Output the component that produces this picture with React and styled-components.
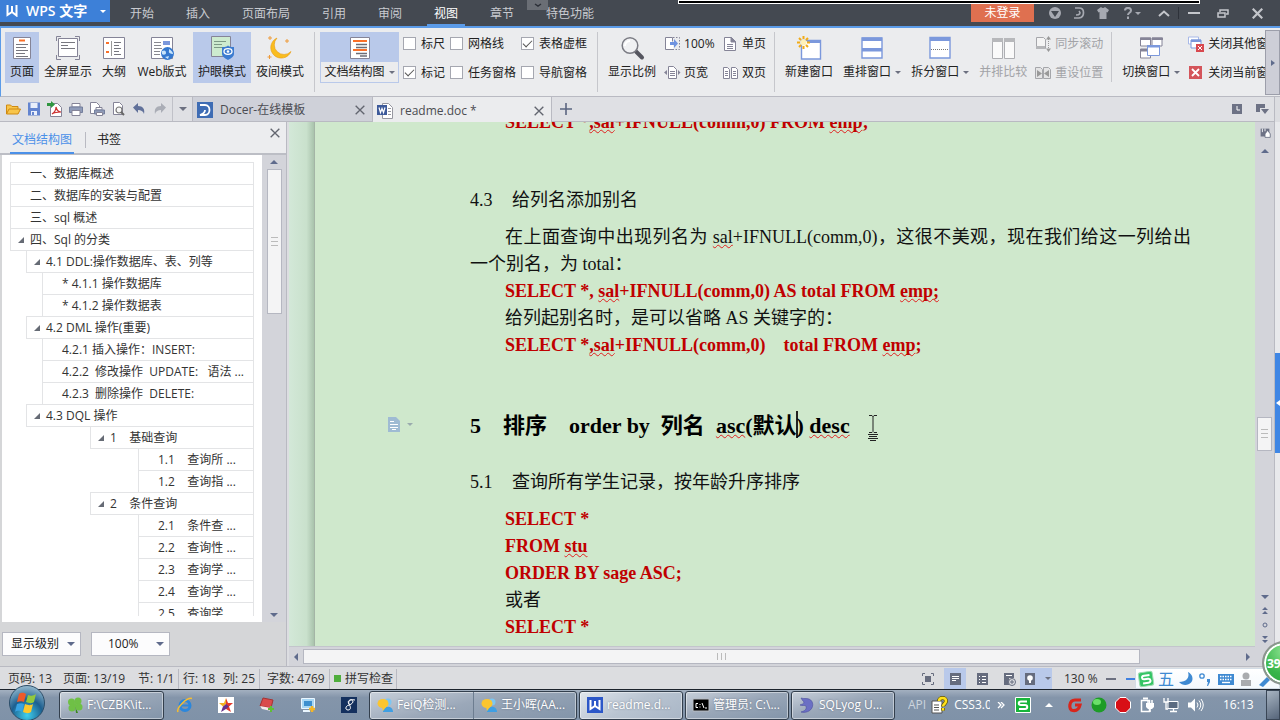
import styled, { createGlobalStyle, css } from 'styled-components';

const GlobalStyle = createGlobalStyle`
    * {
        box-sizing: border-box;
    }

    body {
        margin: 0;
        overflow: hidden;
        font-family: 'Open Sans', 'Noto Sans CJK SC', sans-serif;
        font-size: 12px;
        line-height: 20px;
        color: #222;
    }

    button, input, select {
        font: inherit;
        color: inherit;
        margin: 0;
    }

    button {
        background: none;
        border: none;
        padding: 0;
        white-space: nowrap;
    }

    svg {
        display: block;
        flex: none;
    }
`;

const Screen = styled.div`
    position: relative;
    display: flex;
    flex-direction: column;
    height: 100vh;
    overflow: hidden;
    background: #dcdde1;
`;

/* ---------- title bar ---------- */

const TitleBar = styled.header`
    display: flex;
    height: 28px;
    flex: none;
    background: #444951;
    border-bottom: 2px solid #5b9be8;
`;

const AppButton = styled.button`
    display: flex;
    align-items: center;
    width: 110px;
    height: 22px;
    padding: 0 4px 0 6px;
    background: #3d80d8;
    color: #fff;
    font-size: 14px;
    font-weight: 600;

    span {
        flex: 1;
        padding-left: 8px;
        text-align: left;
    }
`;

const Menu = styled.nav`
    display: flex;
    gap: 18px;
    padding-left: 13px;
`;

const MenuTab = styled.button`
    height: 26px;
    padding: 3px 7px 0;
    color: ${(p) => (p.$active ? '#fff' : '#c9cbd0')};
    border-bottom: 2px solid ${(p) => (p.$active ? '#5b9be8' : 'transparent')};
`;

const WindowTools = styled.div`
    display: flex;
    align-items: center;
    margin-left: auto;
    margin-right: 4px;
    color: #a6a9b1;
`;

const LoginButton = styled.button`
    width: 63px;
    height: 18px;
    line-height: 18px;
    margin-right: 9px;
    background: #df7050;
    color: #fff;
`;

const ToolSlot = styled.button`
    display: flex;
    align-items: center;
    justify-content: center;
    width: ${(p) => p.$w || 24}px;
    height: 22px;
`;

const ToolDivider = styled.i`
    width: 1px;
    height: 12px;
    background: #2e323a;
`;

const PullTab = styled.div`
    position: absolute;
    top: 0;
    left: 527px;
    width: 21px;
    height: 10px;
    background: #6a6e75;
`;

const RecordBar = styled.div`
    position: absolute;
    top: 0;
    left: 678px;
    right: 80px;
    height: 4px;
    background: #000;
    border: 1px solid #fff;
`;

/* ---------- ribbon ---------- */

const Ribbon = styled.section`
    display: flex;
    height: 69px;
    flex: none;
    background: #ebecee;
    border-left: 1px solid #5b9be8;
    border-bottom: 1px solid #b9bac2;
`;

const RibbonItems = styled.div`
    display: flex;
    flex: 1;
    min-width: 0;
    overflow: hidden;
    align-items: flex-start;
    padding: 4px 0 0 4px;
`;

const BigButtonBox = styled.button`
    display: flex;
    flex-direction: column;
    flex: none;
    min-width: ${(p) => p.$w || 0}px;
    height: 51px;
    align-items: center;
    padding: 0 5px;
    background: ${(p) => (p.$active ? '#b9c9ea' : 'none')};
    color: ${(p) => (p.disabled ? '#a2a3a7' : '#222')};
`;

const IconArea = styled.span`
    display: flex;
    align-items: center;
    justify-content: center;
    height: 30px;
    padding-top: 2px;
`;

const ButtonLabel = styled.span`
    display: flex;
    align-items: center;
    gap: 4px;
`;

const StructureButton = styled(BigButtonBox)`
    width: 79px;
    padding: 0;
    background: #b9c9ea;

    ${ButtonLabel} {
        width: 100%;
        justify-content: center;
        background: #ebecee;
        border: 1px solid #b9c9ea;
        border-top: none;
    }
`;

const RibbonDivider = styled.i`
    flex: none;
    width: 1px;
    height: ${(p) => p.$h || 60}px;
    margin: 0 5px;
    background: #c6c7cc;
`;

const CheckGrid = styled.div`
    display: grid;
    flex: none;
    grid-template-columns: 47px 71px 66px;
    grid-template-rows: 23px 23px;
    row-gap: 6px;
    padding: 0 5px 0 4px;
`;

const CheckLabel = styled.label`
    display: flex;
    align-items: center;
    gap: 5px;
    white-space: nowrap;

    input {
        appearance: none;
        display: grid;
        place-items: center;
        width: 13px;
        height: 13px;
        background: #fff;
        border: 1px solid #a5a7b0;
    }

    input:checked::after {
        content: '';
        width: 8px;
        height: 4px;
        margin-bottom: 2px;
        border-left: 1px solid #555;
        border-bottom: 1px solid #555;
        transform: rotate(-45deg);
    }
`;

const SmallGrid = styled.div`
    display: grid;
    flex: none;
    grid-template-columns: ${(p) => p.$cols || 'auto'};
    grid-template-rows: 23px 23px;
    row-gap: 6px;
    padding: 0 3px;
`;

const SmallButton = styled.button`
    display: flex;
    align-items: center;
    gap: 4px;
    color: ${(p) => (p.disabled ? '#a2a3a7' : '#222')};
`;

const RibbonScroll = styled.button`
    display: grid;
    place-items: center;
    width: 15px;
    height: 65px;
    margin-top: 2px;
    background: #cdced7;
    border: 1px solid #9c9eaa;
`;

/* ---------- quick access and document tabs ---------- */

const TabRow = styled.div`
    display: flex;
    height: 25px;
    flex: none;
    margin-right: 5px;
    background: #dfe0e4;
    border-bottom: 1px solid #b9bac2;
    border-right: 1px solid #b9bac2;
`;

const QuickBar = styled.div`
    display: flex;
    padding-left: 2px;
`;

const QuickButton = styled.button`
    display: grid;
    place-items: center;
    width: ${(p) => p.$w || 21}px;
`;

const QuickDivider = styled.i`
    width: 1px;
    margin-left: 2px;
    background: #c0c1c8;
`;

const DocTab = styled.div`
    display: flex;
    align-items: center;
    width: ${(p) => (p.$active ? 179 : 181)}px;
    height: ${(p) => (p.$active ? 25 : 24)}px;
    padding: 2px 7px 0 4px;
    gap: 7px;
    background: ${(p) => (p.$active ? '#ebecee' : '#cfd1d9')};
    border-right: 1px solid #b9bac2;
    border-left: ${(p) => (p.$active ? 'none' : '1px solid #b9bac2')};
    color: #4b4c52;

    span {
        flex: 1;
    }
`;

const RightTools = styled.div`
    display: flex;
    margin-left: auto;
`;

/* ---------- side pane ---------- */

const Body = styled.div`
    display: flex;
    flex: 1;
    min-height: 0;
`;

const SidePane = styled.aside`
    display: flex;
    flex-direction: column;
    flex: none;
    width: 287px;
    background: #d5d6d8;
    border-right: 1px solid #b9bac2;
`;

const PaneHeader = styled.div`
    display: flex;
    align-items: center;
    height: 33px;
    flex: none;
    padding-left: 10px;
    background: #ecedef;
    border-bottom: 2px solid #bcbec5;
`;

const PaneTab = styled.button`
    height: 33px;
    padding: 6px 2px 0;
    color: ${(p) => (p.$active ? '#4b90e8' : '#222')};
    border-bottom: 2px solid ${(p) => (p.$active ? '#4b90e8' : 'transparent')};
`;

const PaneTabDivider = styled.i`
    width: 1px;
    height: 16px;
    margin: 4px 9px 0 11px;
    background: #b9bac2;
`;

const PaneClose = styled.button`
    align-self: flex-start;
    margin: 6px 6px 0 auto;
`;

const PaneBody = styled.div`
    display: flex;
    flex: 1;
    min-height: 0;
    padding-left: 2px;
`;

const TreeArea = styled.div`
    display: flex;
    flex: 1;
    padding: 7px 8px 6px;
    background: #fff;
`;

const Tree = styled.ul`
    flex: 1;
    margin: 0;
    padding: 1px 0 0;
    overflow: hidden;
    list-style: none;
`;

const TreeRow = styled.li`
    display: flex;
    align-items: center;
    height: 23px;
    margin: -1px 0 0 ${(p) => p.$indent}px;
    border: 1px solid #e3e4e6;
    color: #333;
    white-space: pre;
`;

const Twisty = styled.span`
    display: flex;
    justify-content: center;
    width: 19px;
`;

const VScroll = styled.div`
    display: flex;
    flex-direction: column;
    align-items: center;
    flex: none;
    width: ${(p) => p.$w}px;
    padding-bottom: ${(p) => p.$bottom || 0}px;
    background: #d3d4da;
`;

const VThumb = styled.div`
    display: grid;
    place-items: center;
    width: 15px;
    height: ${(p) => p.$h}px;
    background: #f4f4f5;
    border: 1px solid #b5b7c1;
`;

const Track = styled.div`
    flex: ${(p) => p.$grow || 1};
`;

const ArrowSlot = styled.button`
    display: grid;
    place-items: center;
    flex: none;
    width: 14px;
    height: ${(p) => p.$h || 14}px;
`;

const PaneFooter = styled.div`
    display: flex;
    gap: 10px;
    height: 44px;
    flex: none;
    padding: 10px 0 0 2px;
`;

const Dropdown = styled.label`
    display: grid;
    align-items: center;
    width: 79px;
    height: 24px;
    background: #fcfcfd;
    border: 1px solid #b5b7c1;

    select {
        grid-area: 1 / 1;
        appearance: none;
        width: 100%;
        padding-left: ${(p) => p.$pad}px;
        background: none;
        border: none;
    }

    svg {
        grid-area: 1 / 1;
        justify-self: end;
        margin-right: 5px;
    }
`;

/* ---------- document ---------- */

const DocArea = styled.main`
    display: flex;
    flex-direction: column;
    flex: 1;
    min-width: 0;
    margin-left: 2px;
`;

const DocView = styled.div`
    display: flex;
    flex: 1;
    min-height: 0;
    overflow: hidden;
    background: #cfe8cc;
`;

const PageEdge = styled.div`
    flex: none;
    width: 26px;
    background: linear-gradient(90deg, #d3e8d8, #c9e1cc 70%, #a9c3ac);
    border-right: 1px solid #a4b5a6;
`;

const Page = styled.article`
    flex: 1;
    min-width: 0;
    max-width: 876px;
    margin-top: -13px;
    padding-left: 155px;
    font-family: 'Liberation Serif', 'Noto Sans CJK SC', serif;
    font-size: 18px;
    line-height: 27px;
    color: #111;
`;

const DocTitle = styled.h1`
    position: relative;
    display: flex;
    align-items: center;
    height: 27px;
    margin: 53px 0 30px;
    font-size: 22px;
    line-height: 27px;
    white-space: pre;
    color: #000;
`;

const DocHeading = styled.h2`
    display: flex;
    height: 27px;
    margin: ${(p) => p.$top}px 0 10px;
    font-size: 18px;
    font-weight: 400;
    white-space: pre;
`;

const Num = styled.span`
    width: ${(p) => p.$w}px;
`;

const Para = styled.p`
    margin: 0;
    padding-left: ${(p) => (p.$wrap ? 0 : 35)}px;
    text-indent: ${(p) => (p.$wrap ? 35 : 0)}px;
    text-align: ${(p) => (p.$wrap ? 'justify' : 'left')};
    white-space: ${(p) => (p.$wrap ? 'normal' : 'pre')};
    ${(p) =>
        p.$sql &&
        css`
            color: #c00000;
            font-weight: 700;
        `}
`;

const Typo = styled.span`
    text-decoration: underline wavy #e02020 1px;
    text-decoration-skip-ink: none;
    text-underline-offset: 1px;
`;

const Caret = styled.i`
    width: 2px;
    height: 27px;
    margin: -3px -1px 0;
    background: #222;
`;

const SectionMark = styled.button`
    position: absolute;
    left: -82px;
    top: 5px;
    display: flex;
    align-items: center;
    gap: 7px;
`;

const Pointer = styled.svg`
    position: absolute;
    left: 397px;
    top: 3px;
`;

const HScroll = styled.div`
    display: flex;
    align-items: center;
    flex: none;
    height: 20px;
    background: #d3d4da;
    border-top: 1px solid #c3c5cc;
`;

const HThumb = styled.div`
    display: grid;
    place-items: center;
    flex: 1;
    height: 15px;
    margin-right: 101px;
    background: #f4f4f5;
    border: 1px solid #b5b7c1;
`;

const DockStrip = styled.div`
    display: flex;
    align-items: center;
    flex: none;
    width: 6px;
    background: #e8e9ec;
    border-left: 1px solid #b9bac2;
`;

const DockHandle = styled.button`
    display: grid;
    place-items: center;
    width: 5px;
    height: 100px;
    margin-bottom: -18px;
    background: #3f86e4;
`;

/* ---------- status bar ---------- */

const StatusBar = styled.footer`
    display: flex;
    align-items: center;
    height: 23px;
    flex: none;
    padding: 1px 0 0 8px;
    background: #dcdde0;
    border-top: 1px solid #b9bac2;
    color: #333;
    white-space: pre;
`;

const StatusItem = styled.span`
    width: ${(p) => p.$w}px;
`;

const StatusDivider = styled.i`
    width: 1px;
    height: 20px;
    margin-right: ${(p) => p.$gap || 4}px;
    background: #b9bac2;
`;

const GreenDot = styled.i`
    width: 7px;
    height: 7px;
    margin-right: 4px;
    background: #4fae3c;
`;

const ViewButtons = styled.div`
    display: flex;
    align-items: center;
    margin-left: auto;
    margin-right: 144px;
`;

const ViewButton = styled.button`
    display: flex;
    align-items: center;
    justify-content: center;
    gap: 7px;
    width: ${(p) => p.$w || 28}px;
    height: 21px;
    background: ${(p) => (p.$active ? '#b9c9ea' : 'none')};
`;

const ZoomValue = styled.span`
    width: 38px;
    margin-left: 12px;
`;

const ZoomLine = styled.i`
    width: 10px;
    height: 2px;
    margin-left: ${(p) => p.$gap}px;
    background: ${(p) => p.$color};
`;

/* ---------- taskbar ---------- */

const Taskbar = styled.footer`
    position: relative;
    display: flex;
    align-items: center;
    height: 31px;
    flex: none;
    background: linear-gradient(#a3b0c0, #8495aa 25%, #7f92a8);
    border-top: 1px solid #1c232c;
    color: #fff;
`;

const StartButton = styled.button`
    flex: none;
    width: 59px;
    height: 36px;
    margin-top: -5px;
    padding-left: 9px;
`;

const TaskGroup = styled.div`
    display: flex;
    flex: none;
    height: 29px;
    margin-right: ${(p) => p.$gap || 0}px;
    border: 1px solid #333f4d;
    border-radius: 3px;
    background: ${(p) =>
        p.$active
            ? 'linear-gradient(150deg, #dfe5ec, #b9c4d1 50%, #a9b6c6)'
            : 'linear-gradient(165deg, #c8d0da, #9ba8b9 45%, #8294a9)'};
    box-shadow: inset 0 0 0 1px rgba(255, 255, 255, 0.45);
`;

const Task = styled.button`
    display: flex;
    align-items: center;
    gap: 4px;
    width: ${(p) => p.$w || 102}px;
    padding-left: 7px;
    color: #fff;
    text-shadow: 0 0 2px rgba(60, 70, 90, 0.6);

    & + & {
        border-left: 1px solid #6d7d90;
    }
`;

const LaunchSlot = styled.button`
    display: grid;
    place-items: center;
    width: ${(p) => p.$w || 41}px;
    height: 28px;
`;

const LinkBar = styled.div`
    display: flex;
    align-items: center;
    gap: 6px;
    width: 82px;
    margin-left: 13px;
    overflow: hidden;
    white-space: nowrap;
`;

const Faded = styled.span`
    color: #cdd5de;
`;

const Tray = styled.div`
    display: flex;
    align-items: center;
    margin-left: auto;
`;

const Clock = styled.time`
    width: 59px;
    padding-left: 16px;
`;

const ShowDesktop = styled.button`
    width: 14px;
    height: 30px;
    background: linear-gradient(150deg, #a8b4c2, #56657a);
    border: 1px solid #3a4656;
`;

const ImeBar = styled.div`
    position: absolute;
    right: 0;
    bottom: 31px;
    display: flex;
    align-items: center;
    gap: 4px;
    width: 145px;
    height: 21px;
    padding-left: 2px;
    background: linear-gradient(#fff, #f4f9fd);
    border: 1px solid #d4dde6;
    color: #3f8ad2;
    font-size: 16px;
`;

const SpeedBall = styled.div`
    position: absolute;
    right: -26px;
    bottom: 35px;
    width: 44px;
    height: 44px;
    padding-left: 3px;
    border-radius: 50%;
    border: 2px solid #8d9490;
    background: radial-gradient(circle at 50% 20%, #8be28f, #38b54a 60%, #2ea540);
    box-shadow: inset 0 0 0 2px #fff;
    color: #fff;
    font-size: 12px;
    font-weight: 700;
    line-height: 42px;
`;

/* ---------- icons ---------- */

const G = '#858497';
const O = '#fa7029';
const B = '#7b98dc';

const Down = ({ color = '#6c7080', w = 6 }) => (
    <svg width={w} height={w / 2} viewBox="0 0 6 3"><path d="M0 0h6L3 3z" fill={color} /></svg>
);

const Up = () => (
    <svg width="8" height="4" viewBox="0 0 8 4"><path d="M0 4h8L4 0z" fill="#5f6b8c" /></svg>
);

const Cross = ({ size = 9, color = '#62656f', sw = 1.2 }) => (
    <svg width={size} height={size} viewBox="0 0 9 9">
        <path d="M.6.6l7.8 7.8M8.4.6L.6 8.4" stroke={color} strokeWidth={sw} />
    </svg>
);

const Grip = ({ turned }) => (
    <svg width="9" height="9" viewBox="0 0 9 9">
        <path d={turned ? 'M.5 1v7M4.5 1v7M8.5 1v7' : 'M1 .5h7M1 4.5h7M1 8.5h7'} stroke="#bbb" />
    </svg>
);

const WpsMark = () => (
    <svg width="12" height="12" viewBox="0 0 12 12">
        <path d="M1.500 0v10L6 7l4.500 3.500V0M6 1v6" fill="none" stroke="#fff" strokeWidth="2" />
    </svg>
);

const bigIcons = {
    page: (
        <>
            <path d="M3.500 1.500h17v21h-17z" fill="#fff" stroke={G} />
            <path d="M9 4.500h6" stroke={O} strokeWidth="2" />
            <path d="M6 8.500h12M6 11.500h10M6 14.500h12M6 17.500h9M6 20.500h12" stroke="#77777f" />
        </>
    ),
    full: (
        <>
            <path d="M2.500 2.500h19v18h-19z" fill="#fff" stroke={G} />
            <path d="M.5 5V.5H5M19 .5h4.500V5M.5 19v4.500H5M19 23.500h4.500V19" fill="none" stroke={G} />
            <path d="M5 6.500h14M5 9.500h7M5 12.500h14" stroke="#77777f" />
        </>
    ),
    outline: (
        <>
            <path d="M1.500 1.500h21v21h-21z" fill="#fff" stroke={G} />
            <path d="M4 7h3M4 16h3" stroke={O} strokeWidth="2" />
            <path d="M9.500 5v15" stroke="#999" />
            <path d="M12 6.500h7M12 9.500h5M12 12.500h7M12 15.500h5M12 18.500h7" stroke="#77777f" />
        </>
    ),
    web: (
        <>
            <path d="M1.500 1.500h21v21h-21z" fill="#fff" stroke={G} />
            <path d="M4 6.500h7M4 9.500h7M4 12.500h8M4 15.500h6M4 18.500h6" stroke="#88888f" />
            <path d="M13 5h7v4h-7z" fill={B} />
            <circle cx="17.500" cy="17.500" r="6.500" fill="#3478cf" />
            <path d="M12 15c2-1 4-1 4 2 0 2-3 2-4 1M19 13c2 1 4 3 4 5-2 0-5-1-4-3M15 21l4-1-1 3z" fill="#c8e4fa" />
        </>
    ),
    eye: (
        <>
            <path d="M1.500 .5h19v20h-19z" fill="#cdebcf" stroke={G} />
            <path d="M4 5.500h12M4 8.500h8M4 11.500h8" stroke="#7d9a86" />
            <path d="M12 11q6 0 6-2 0 2 6 2v7q0 3-6 6-6-3-6-6z" fill="#3b7bd0" />
            <ellipse cx="18" cy="15.500" rx="4" ry="2.800" fill="none" stroke="#fff" strokeWidth="1.300" />
            <circle cx="18" cy="15.500" r="1.300" fill="#fff" />
        </>
    ),
    moon: (
        <>
            <path d="M9 2A10.500 10.500 0 1 0 23 15.500 9.500 9.500 0 0 1 9 2z" fill="#f9bd1f" stroke="#e79a12" strokeWidth=".6" />
            <path d="M2 0v4M0 2h4M19 3v4M17 5h4M1.500 19v4M-.5 21h4" stroke="#ee9b3a" />
        </>
    ),
    structure: (
        <>
            <path d="M2.500 1.500h19v21h-19z" fill="#fff" stroke={G} />
            <path d="M5 5h14M5 14h14" stroke={O} strokeWidth="2" />
            <path d="M8 8.500h11M8 11.500h11M8 17.500h11M12 20h7" stroke="#6d6d76" strokeWidth="1.300" />
        </>
    ),
    zoom: (
        <>
            <path d="M16 15.500l6 6" stroke="#55565f" strokeWidth="4" strokeLinecap="round" />
            <circle cx="10" cy="9.500" r="7.800" fill="#f0f1f3" stroke="#7b7c84" strokeWidth="1.500" />
            <path d="M5 10a5 5 0 0 1 5-5" stroke="#fff" strokeWidth="2" fill="none" />
        </>
    ),
    create: (
        <>
            <path d="M4.500 4.500h19v18.500h-19z" fill="#fff" stroke={B} strokeWidth="1.400" />
            <path d="M10 4h14v3H10z" fill={B} />
            <circle cx="6.500" cy="6.500" r="3" fill="#fff1b8" />
            <path d="M6.500 0v3M6.500 10v3M0 6.500h3M10 6.500h3M2 2l2 2M9 9l2 2M11 2L9 4M4 9l-2 2" stroke="#f2ab17" strokeWidth="2" />
        </>
    ),
    arrange: (
        <>
            <path d="M2 2h20v20H2z" fill="#fff" stroke={B} strokeWidth="1.400" />
            <path d="M2 1.500h20V5H2zM2 12h20v3.500H2z" fill={B} />
        </>
    ),
    split: (
        <>
            <path d="M2 1.500h20v20.500H2z" fill="#fff" stroke={B} strokeWidth="1.400" />
            <path d="M2 1.500h20V5H2z" fill={B} />
            <path d="M3 13.500h18" stroke="#777" strokeDasharray="1 1" />
        </>
    ),
    compare: (
        <>
            <path d="M1.500 2.500h10v20h-10zM13.500 2.500h10v20h-10z" fill="#fafafa" stroke="#aeafb3" />
            <path d="M1 2h11v4H1zM13 2h11v4H13z" fill="#b7b8bb" />
        </>
    ),
    change: (
        <>
            <path d="M1.500 2h10v8h-10zM13 2h10v8H13zM1.500 13h10v9h-10z" fill="#fff" stroke={G} />
            <path d="M1 1.500h11V4H1zM13 1.500h11V4H13zM1 13h10v2.500H1z" fill={G} />
            <path d="M8.500 9.500h12v10h-12z" fill="#fff" stroke={B} />
            <path d="M8 9h13v2.500H8z" fill={B} />
        </>
    ),
};

const smallIcons = {
    actual: (
        <>
            <path d="M8.500 1.500h-7v12h8M8.500 1.500v4" fill="#fff" stroke={G} />
            <path d="M9 1.500h6.500v12H9" fill="none" stroke={G} strokeDasharray="1.500 1.500" />
            <path d="M6 6h4V3l4 4.500-4 4.500V9H6z" fill="#6f93e0" />
        </>
    ),
    width: (
        <>
            <path d="M4.500 1.500h5l3 3v9h-8z" fill="#fff" stroke={G} />
            <path d="M6 6.500h5M6 8.500h5M6 10.500h5" stroke={G} />
            <path d="M3 5L0 7.500 3 10zM14 5l2.500 2.500L14 10z" fill={G} />
        </>
    ),
    single: (
        <>
            <path d="M2.500 1.500h7l4 4v9h-11z" fill="#fff" stroke={G} />
            <path d="M9 1v5h5" fill={G} stroke={G} />
            <path d="M5 8.500h6M5 10.500h6M5 12.500h6" stroke={G} />
        </>
    ),
    double: (
        <>
            <path d="M1.500 2.500h4l2 2v9h-6zM9.500 2.500h4l2 2v9h-6z" fill="#fff" stroke={G} />
            <path d="M3 6.500h3M3 8.500h3M3 10.500h3M11 6.500h3M11 8.500h3M11 10.500h3" stroke={G} />
        </>
    ),
    sync: (
        <>
            <path d="M1.500 1.500h7l2 2v9h-9z" fill="#f4f4f4" stroke="#a5a6aa" />
            <path d="M1 10h9v3H1z" fill="#b5b6b9" />
            <path d="M13.500 3v11" stroke="#999" strokeDasharray="1 1" />
            <path d="M11 3.500L13.500 0 16 3.500zM11 12.500l2.500 3.500 2.500-3.500z" fill="#999" />
        </>
    ),
    reset: (
        <>
            <path d="M.5 2.500h5l2 2v9h-7zM8.500 2.500h5l2 2v9h-7z" fill="#e4e4e5" stroke="#a5a6aa" />
            <path d="M2 5l5 3.500L2 12zM14 5L9 8.500l5 3.500z" fill="#999" />
        </>
    ),
    closeOthers: (
        <>
            <path d="M.5 1h10v7H.5z" fill="#fff" stroke="#a8b9e8" />
            <path d="M3 4h10v8H3z" fill="#fff" stroke={B} />
            <path d="M3 3.500h10V6H3z" fill={B} />
            <path d="M8 8h8v8H8z" fill="#d8494f" />
            <path d="M10 10l4 4M14 10l-4 4" stroke="#fff" />
        </>
    ),
    closeCurrent: (
        <>
            <path d="M1 1h13v13H1z" fill="#d4555b" />
            <path d="M4 4l7 7M11 4l-7 7" stroke="#fff" strokeWidth="1.800" />
        </>
    ),
    open: <path d="M1.500 13V4h4l1.500 1.500h6V8M1.500 13L4 8h11.500L13 13z" fill="#f8c54a" stroke="#cf8a12" />,
    save: (
        <>
            <path d="M2 1.500h12v13H2z" fill="#6384cf" />
            <path d="M4.500 2h7v5h-7zM5 10h6v4H5z" fill="#e9effb" />
            <path d="M6 11h2v3H6z" fill="#6384cf" />
        </>
    ),
    pdf: (
        <>
            <path d="M3.500 2.500h7l4 4v9h-11z" fill="#fff" stroke={G} />
            <path d="M5 13c3-2 4-5 4-7 1 4 3 5 5 5-3 0-6 0-9 2z" fill="none" stroke="#cc3030" strokeWidth="1.200" />
            <path d="M0 2h4V0l4 3.500L4 7V5H0z" fill="#2f9640" />
        </>
    ),
    print: (
        <>
            <path d="M4 2.500h8V6H4z" fill="#fff" stroke={G} />
            <path d="M1.500 6h13v5.500h-13z" fill="#8f9bb8" stroke="#747f9c" />
            <path d="M4 9.500h8v5H4z" fill="#fff" stroke={G} />
        </>
    ),
    quickPrint: (
        <>
            <path d="M1.500 1.500h6l3 3v8h-9z" fill="#fff" stroke={G} />
            <path d="M7 6.500h6V9H7z" fill="#fff" stroke={G} />
            <path d="M5.500 9h10v4h-10z" fill="#8f9bb8" stroke="#747f9c" />
            <path d="M7.500 11.500h6v3h-6z" fill="#fff" stroke={G} />
        </>
    ),
    preview: (
        <>
            <path d="M3.500 1.500h6l3 3v9h-9z" fill="#fff" stroke={G} />
            <circle cx="9" cy="9" r="3" fill="#f7f7f7" stroke="#777" strokeWidth="1.200" />
            <path d="M11 11l3 3" stroke="#666" strokeWidth="2" />
        </>
    ),
    undo: <path d="M2 6.500L7 2v3c5 0 7 3 6 8-1-3-3-4-6-4v3z" fill="#61719a" />,
    redo: <path d="M14 6.500L9 2v3c-5 0-7 3-6 8 1-3 3-4 6-4v3z" fill="#aaadb6" />,
    docer: (
        <>
            <path d="M0 0h16v16H0z" fill="#3e6cb4" />
            <path d="M3 3h5c6 0 6 10 0 10H3c3-1 5-3 5-5" fill="none" stroke="#fff" strokeWidth="1.800" />
        </>
    ),
    word: (
        <>
            <path d="M5.500.5h6l4 4v11h-10z" fill="#fff" stroke="#9697a0" />
            <path d="M11 5.500h3M11 8.500h3M11 11.500h3" stroke="#9697a0" />
            <path d="M0 2h10v10H0z" fill="#3d5a9a" />
            <path d="M2 4.500l1.500 5L5 5.500l1.500 4 1.500-5" fill="none" stroke="#fff" strokeWidth="1.200" />
        </>
    ),
    clock: (
        <>
            <path d="M3 3h10v10H3z" fill="#6d7285" />
            <path d="M8 5v4h3" fill="none" stroke="#fff" />
        </>
    ),
    tabList: <path d="M2 3h9v4H6v4H2zM7 8h8l-4 5z" fill="#6d7285" />,
    ruler: (
        <>
            <path d="M3 3h10v9H3z" fill="#6d7285" />
            <path d="M5 3v4M8 3v3" stroke="#fff" />
            <path d="M8 9l3-4 3 4v4H8z" fill="#fff" stroke="#6d7285" />
        </>
    ),
    fit: (
        <>
            <path d="M5 5h6v6H5z" fill="#666c7e" />
            <path d="M2.500 5V2.500H5M11 2.500h2.500V5M2.500 11v2.500H5M11 13.500h2.500V11" fill="none" stroke="#666c7e" />
        </>
    ),
    viewPage: (
        <>
            <path d="M3 2h11v12H3z" fill="#666c7e" />
            <path d="M5 5.500h7M5 7.500h7M5 9.500h4" stroke="#fff" />
        </>
    ),
    viewList: (
        <>
            <path d="M3 2h11v12H3z" fill="#666c7e" />
            <path d="M5 5.500h1M8 5.500h4M5 8.500h1M8 8.500h4M5 11.500h1M8 11.500h4" stroke="#fff" />
        </>
    ),
    viewWeb: (
        <>
            <path d="M3 2h10v5H8v7H3z" fill="#666c7e" />
            <path d="M5 4.500h6" stroke="#fff" />
            <circle cx="11" cy="11" r="3.500" fill="#dcdde0" stroke="#666c7e" />
            <path d="M9 11h4M11 9v4" stroke="#666c7e" />
        </>
    ),
    bulb: (
        <>
            <path d="M3 2h10v12H3z" fill="#666c7e" />
            <circle cx="8" cy="7" r="2.800" fill="#fff" />
            <path d="M7 9h2v3H7z" fill="#fff" />
        </>
    ),
    clover: (
        <g fill="#6fc046">
            <path d="M8 8l3 8h-2z" fill="#3b8620" />
            <circle cx="4.500" cy="5" r="3.500" />
            <circle cx="11" cy="4" r="3.500" />
            <circle cx="5" cy="11" r="3.500" />
            <circle cx="12" cy="10" r="3.500" />
            <circle cx="8" cy="8" r="2" />
        </g>
    ),
    ie: (
        <>
            <circle cx="8" cy="8.500" r="5" fill="none" stroke="#2b87dc" strokeWidth="3" />
            <path d="M4 8.500h10" stroke="#2b87dc" strokeWidth="2" />
            <path d="M1 15C-1 11 10 0 15 1.500" fill="none" stroke="#f5bd31" strokeWidth="1.500" />
        </>
    ),
    star: (
        <>
            <path d="M0 0h16v16H0z" fill="#fff" />
            <path d="M8 1l2 5h5l-4 3.500L13 15l-5-3z" fill="#e23a2e" />
            <path d="M8 1L6 6H1l4 3.500 3-2.500z" fill="#f2b022" />
            <path d="M5 9.500L3 15l5-3 3-2.500L8 7z" fill="#64318d" />
        </>
    ),
    book: (
        <>
            <path d="M4 1l10 2-2 8-11-2z" fill="#d94c4c" stroke="#a63333" />
            <path d="M1 9l11 2v3L3 12z" fill="#f4eaea" />
            <path d="M12 9v6M9 12h6" stroke="#5fbf33" strokeWidth="2" />
        </>
    ),
    desk: (
        <>
            <path d="M1.500 1.500h13v10h-13z" fill="#a8d7f5" stroke="#eaf6ff" />
            <path d="M4 4h8v5H4z" fill="#3c8fcf" />
            <path d="M3 14h7" stroke="#eaf6ff" strokeWidth="2" />
            <path d="M12 9v6M9 12h6" stroke="#f5b626" strokeWidth="2.500" />
        </>
    ),
    loop: (
        <>
            <path d="M0 0h16v16H0z" fill="#14305e" />
            <path d="M14 3c-6-1-8 1-6 4s2 6-1 6-3-4 1-5 5-4 3-5-4 2-3 4" fill="none" stroke="#fff" />
        </>
    ),
    chat: (
        <>
            <circle cx="11" cy="5" r="3.500" fill="#7cc6f2" />
            <path d="M6 15c0-7 10-7 10 0z" fill="#3f9fe3" />
            <ellipse cx="6" cy="6.500" rx="5.500" ry="4.500" fill="#fbc52f" />
            <path d="M5 10l1 4 3-4z" fill="#fbc52f" />
        </>
    ),
    wps: (
        <>
            <path d="M0 0h16v16H0z" fill="#2c57c8" />
            <path d="M3.500 3v9L8 9l4.500 3V3M8 4v5" fill="none" stroke="#fff" strokeWidth="2" />
        </>
    ),
    cmd: (
        <>
            <path d="M0 2h16v12H0z" fill="#000" stroke="#b8bcc2" />
            <path d="M5 6.500H3v4h2M7 7v1M7 9.500v1M9 6l2 5M12 11h2" fill="none" stroke="#fff" />
        </>
    ),
    dolphin: <path d="M2 1c3 1 5 0 8 1 5 2 5 9 0 12-2 1-5 2-8 1 4-1 6-3 5-6-1-1-4 0-6-1 2-1 4-1 4-3C4 4 3 3 2 1z" fill="#6b6fc4" stroke="#4b4f9e" strokeWidth=".6" />,
    help: (
        <>
            <path d="M0 4h10v12H0z" fill="#fff" stroke="#555" />
            <path d="M2 8h5M2 10.500h5M2 13h5" stroke="#555" />
            <path d="M7 4c0-4 7-4 7 0 0 3-3 3-3 5.500M11 11v2.500" fill="none" stroke="#5f5200" strokeWidth="4" />
            <path d="M7 4c0-4 7-4 7 0 0 3-3 3-3 5.500M11 11v2.500" fill="none" stroke="#ffe11c" strokeWidth="2.500" />
        </>
    ),
    sogou: (
        <>
            <path d="M.5.5h15v15H.5z" fill="#17b53a" stroke="#fff" />
            <path d="M12 4.500H6c-3 0-3 3.500 0 3.500h4c3 0 3 4 0 4H4" fill="none" stroke="#fff" strokeWidth="2" />
        </>
    ),
    sogouTilted: (
        <g transform="rotate(-8 8 8)">
            <rect x="1" y="1" width="14" height="14" rx="2" fill="#35c565" stroke="#9fdcb2" />
            <path d="M12 4.500H6.500c-3 0-3 3.500 0 3.500h3.500c3 0 3 4 0 4H4.500" fill="none" stroke="#fff" strokeWidth="2" />
        </g>
    ),
    gRed: <path d="M14 3H8C2 3 1 13 6 13.500c4 .5 6-1 7-5.500H8" fill="none" stroke="#d8261c" strokeWidth="3.200" />,
    ball: (
        <>
            <circle cx="8" cy="8" r="7.500" fill="#1e9c27" />
            <ellipse cx="6" cy="5" rx="4" ry="3" fill="#6be06a" />
        </>
    ),
    stop: <path d="M5 .5h6L15.500 5v6L11 15.500H5L.5 11V5z" fill="#d80f16" stroke="#fff" />,
    power: (
        <>
            <path d="M2.500 3.500h8v11h-8z" fill="none" stroke="#fff" strokeWidth="1.500" />
            <path d="M4 1.500h5" stroke="#fff" strokeWidth="2" />
            <path d="M7 6h8v4l-2 2H9L7 10z" fill="#fff" />
            <path d="M9 3v3M13 3v3M11 12v3" stroke="#fff" strokeWidth="1.500" />
        </>
    ),
    net: (
        <>
            <path d="M5 4.500h10v7H5z" fill="#5b6b80" stroke="#fff" />
            <path d="M7 14.500h7M10.500 12v2M1 1v4h4V1M3 5v7h2" fill="none" stroke="#fff" strokeWidth="1.300" />
        </>
    ),
    volume: (
        <>
            <path d="M1 5.500h3L8 1.500v13l-4-4H1z" fill="#fff" />
            <path d="M10 5.500q2 2.500 0 5M12 3.500q3.500 4.500 0 9M14 2q4.500 6 0 12" fill="none" stroke="#fff" />
        </>
    ),
    keyboard: (
        <>
            <path d="M0 3h16v11H0z" fill="#3f8ad2" />
            <path d="M2 5.500h12M2 8.500h12" stroke="#fff" strokeWidth="1.400" strokeDasharray="1.500 1" />
            <path d="M4 11.500h8" stroke="#fff" strokeWidth="1.400" />
        </>
    ),
    crescent: <path d="M10 1c2 6-2 10-9 10 5 6 16 2 13-6-1-2-2-3-4-4z" fill="#3f8ad2" />,
    punct: (
        <>
            <circle cx="4" cy="5" r="2.200" fill="none" stroke="#3f8ad2" strokeWidth="1.300" />
            <path d="M9 8h3v3l-2 4H9l1-4H9z" fill="#3f8ad2" />
        </>
    ),
    user: (
        <g fill="#a9abae">
            <circle cx="8" cy="5" r="3.500" />
            <path d="M3 9h10v6H3z" />
        </g>
    ),
    wrench: <path d="M1 14L9 6l3 3-7 7z" fill="#3f8ad2" />,
};

const Big = ({ name }) => (
    <svg width="24" height="24" viewBox="0 0 24 24" overflow="visible">{bigIcons[name]}</svg>
);

const Small = ({ name, size = 16 }) => (
    <svg width={size} height={size} viewBox="0 0 16 16" overflow="visible">{smallIcons[name]}</svg>
);

const DoubleArrow = ({ up }) => (
    <svg width="6" height="8" viewBox="0 0 6 8">
        <path d={up ? 'M0 3h6L3 0zM0 7h6L3 4z' : 'M0 1h6L3 4zM0 5h6L3 8z'} fill="#5f6b8c" />
    </svg>
);

/* ---------- data ---------- */

const menuTabs = ['开始', '插入', '页面布局', '引用', '审阅', '视图', '章节', '特色功能'];

const checks = [
    ['标尺', false], ['网格线', false], ['表格虚框', true],
    ['标记', true], ['任务窗格', false], ['导航窗格', false],
];

const treeRows = [
    [0, '一、数据库概述'],
    [0, '二、数据库的安装与配置'],
    [0, '三、sql 概述'],
    [0, '四、Sql 的分类', true],
    [16, '4.1 DDL:操作数据库、表、列等', true],
    [32, '* 4.1.1 操作数据库'],
    [32, '* 4.1.2 操作数据表'],
    [16, '4.2 DML 操作(重要)', true],
    [32, '4.2.1 插入操作：INSERT:'],
    [32, '4.2.2  修改操作  UPDATE:   语法 ...'],
    [32, '4.2.3  删除操作  DELETE:'],
    [16, '4.3 DQL 操作', true],
    [80, '1    基础查询', true],
    [128, '1.1    查询所 ...'],
    [128, '1.2    查询指 ...'],
    [80, '2    条件查询', true],
    [128, '2.1    条件查 ...'],
    [128, '2.2    查询性 ...'],
    [128, '2.3    查询学 ...'],
    [128, '2.4    查询学 ...'],
    [128, '2.5    查询学 ...'],
];

const quickIcons = [
    ['open', '打开'], ['save', '保存'], ['pdf', '输出为PDF'], ['print', '打印'],
    ['quickPrint', '直接打印'], ['preview', '打印预览'], ['undo', '撤销'], ['redo', '恢复'],
];

function BigButton({ icon, label, active, arrow, disabled, w }) {
    return (
        <BigButtonBox $active={active} $w={w} disabled={disabled}>
            <IconArea><Big name={icon} /></IconArea>
            <ButtonLabel>{label}{arrow && <Down />}</ButtonLabel>
        </BigButtonBox>
    );
}

function Header() {
    return (
        <TitleBar>
            <AppButton>
                <WpsMark />
                <span>WPS 文字</span>
                <Down color="#fff" />
            </AppButton>
            <Menu>
                {menuTabs.map((tab) => (
                    <MenuTab key={tab} $active={tab === '视图'}>{tab}</MenuTab>
                ))}
            </Menu>
            <WindowTools>
                <LoginButton>未登录</LoginButton>
                <ToolSlot aria-label="云">
                    <svg width="12" height="12" viewBox="0 0 12 12">
                        <circle cx="6" cy="6" r="6" fill="#a6a9b1" />
                        <path d="M2 4h8L6 10z" fill="#444951" />
                    </svg>
                </ToolSlot>
                <ToolSlot aria-label="同步">
                    <svg width="12" height="12" viewBox="0 0 12 12">
                        <path d="M2 1h4c6 0 6 9 0 10H1M3 8c4 0 5-2 3-4" fill="none" stroke="#a6a9b1" strokeWidth="1.700" />
                    </svg>
                </ToolSlot>
                <ToolSlot aria-label="皮肤">
                    <svg width="12" height="12" viewBox="0 0 12 12">
                        <path d="M0 3l4-3q2 2 4 0l4 3-1.500 2.500L9.500 5v7h-7V5l-1 .5z" fill="#a6a9b1" />
                    </svg>
                </ToolSlot>
                <ToolSlot $w={35} aria-label="帮助">
                    <svg width="17" height="12" viewBox="0 0 17 12">
                        <path d="M1 3.500c0-3.500 6-3.500 6 0C7 6 4 5.500 4 8M4 9.500V12" fill="none" stroke="#a6a9b1" strokeWidth="2" />
                        <path d="M11 5h6l-3 3z" fill="#a6a9b1" />
                    </svg>
                </ToolSlot>
                <ToolSlot $w={28} aria-label="收起">
                    <svg width="12" height="7" viewBox="0 0 12 7">
                        <path d="M1 6l5-4.500L11 6" fill="none" stroke="#c4c6cb" strokeWidth="2" />
                    </svg>
                </ToolSlot>
                <ToolDivider />
                <ToolSlot $w={29} aria-label="最小化">
                    <svg width="12" height="2" viewBox="0 0 12 2"><path d="M0 1h12" stroke="#c4c6cb" strokeWidth="2" /></svg>
                </ToolSlot>
                <ToolSlot $w={30} aria-label="还原">
                    <svg width="12" height="9" viewBox="0 0 12 9">
                        <path d="M3 3V1h8v4H9M1 4h7v4H1z" fill="none" stroke="#c4c6cb" strokeWidth="1.500" />
                    </svg>
                </ToolSlot>
                <ToolSlot $w={38} aria-label="关闭"><Cross size={11} color="#c4c6cb" sw={1.8} /></ToolSlot>
            </WindowTools>
            <PullTab>
                <svg width="21" height="10" viewBox="0 0 21 10"><path d="M8 4l3 2 3-2" fill="none" stroke="#2c3038" strokeWidth="1.500" /></svg>
            </PullTab>
            <RecordBar />
        </TitleBar>
    );
}

function ViewRibbon() {
    return (
        <Ribbon>
            <RibbonItems>
                <BigButton icon="page" label="页面" active />
                <BigButton icon="full" label="全屏显示" />
                <BigButton icon="outline" label="大纲" />
                <BigButton icon="web" label="Web版式" w={62} />
                <BigButton icon="eye" label="护眼模式" active />
                <BigButton icon="moon" label="夜间模式" />
                <RibbonDivider />
                <StructureButton>
                    <IconArea><Big name="structure" /></IconArea>
                    <ButtonLabel>文档结构图<Down /></ButtonLabel>
                </StructureButton>
                <CheckGrid>
                    {checks.map(([label, on]) => (
                        <CheckLabel key={label}>
                            <input type="checkbox" defaultChecked={on} />
                            {label}
                        </CheckLabel>
                    ))}
                </CheckGrid>
                <RibbonDivider />
                <BigButton icon="zoom" label="显示比例" />
                <SmallGrid $cols="58px 44px">
                    <SmallButton><Small name="actual" />100%</SmallButton>
                    <SmallButton><Small name="single" />单页</SmallButton>
                    <SmallButton><Small name="width" />页宽</SmallButton>
                    <SmallButton><Small name="double" />双页</SmallButton>
                </SmallGrid>
                <RibbonDivider />
                <BigButton icon="create" label="新建窗口" />
                <BigButton icon="arrange" label="重排窗口" arrow />
                <BigButton icon="split" label="拆分窗口" arrow />
                <BigButton icon="compare" label="并排比较" disabled />
                <SmallGrid>
                    <SmallButton disabled><Small name="sync" />同步滚动</SmallButton>
                    <SmallButton disabled><Small name="reset" />重设位置</SmallButton>
                </SmallGrid>
                <RibbonDivider $h={50} />
                <BigButton icon="change" label="切换窗口" arrow />
                <SmallGrid>
                    <SmallButton><Small name="closeOthers" />关闭其他窗口</SmallButton>
                    <SmallButton><Small name="closeCurrent" />关闭当前窗口</SmallButton>
                </SmallGrid>
            </RibbonItems>
            <RibbonScroll aria-label="更多">
                <svg width="4" height="6" viewBox="0 0 4 6"><path d="M0 0v6l4-3z" fill="#5f6b8c" /></svg>
            </RibbonScroll>
        </Ribbon>
    );
}

function DocumentTabs() {
    return (
        <TabRow>
            <QuickBar>
                {quickIcons.map(([name, label]) => (
                    <QuickButton key={name} aria-label={label}><Small name={name} /></QuickButton>
                ))}
                <QuickDivider />
                <QuickButton $w={19} aria-label="自定义"><Down w={8} /></QuickButton>
            </QuickBar>
            <DocTab>
                <Small name="docer" />
                <span>Docer-在线模板</span>
                <Cross size={10} />
            </DocTab>
            <DocTab $active>
                <Small name="word" />
                <span>readme.doc *</span>
                <Cross size={10} />
            </DocTab>
            <QuickButton $w={28} aria-label="新建">
                <svg width="12" height="12" viewBox="0 0 12 12"><path d="M6 0v12M0 6h12" stroke="#5b6580" strokeWidth="1.600" /></svg>
            </QuickButton>
            <RightTools>
                <QuickButton $w={24} aria-label="历史"><Small name="clock" /></QuickButton>
                <QuickButton $w={25} aria-label="标签列表"><Small name="tabList" /></QuickButton>
            </RightTools>
        </TabRow>
    );
}

function Outline() {
    return (
        <SidePane>
            <PaneHeader>
                <PaneTab $active>文档结构图</PaneTab>
                <PaneTabDivider />
                <PaneTab>书签</PaneTab>
                <PaneClose aria-label="关闭"><Cross size={10} /></PaneClose>
            </PaneHeader>
            <PaneBody>
                <TreeArea>
                    <Tree>
                        {treeRows.map(([indent, text, open]) => (
                            <TreeRow key={text} $indent={indent}>
                                <Twisty>
                                    {open && <svg width="6" height="6" viewBox="0 0 6 6"><path d="M6 0v6H0z" fill="#666b75" /></svg>}
                                </Twisty>
                                {text}
                            </TreeRow>
                        ))}
                    </Tree>
                </TreeArea>
                <VScroll $w={24}>
                    <ArrowSlot aria-label="向上"><Up /></ArrowSlot>
                    <VThumb $h={145}><Grip /></VThumb>
                    <Track />
                    <ArrowSlot aria-label="向下"><Down w={8} color="#5f6b8c" /></ArrowSlot>
                </VScroll>
            </PaneBody>
            <PaneFooter>
                <Dropdown $pad={8}>
                    <select aria-label="显示级别"><option>显示级别</option></select>
                    <Down w={8} color="#5f6b8c" />
                </Dropdown>
                <Dropdown $pad={16}>
                    <select aria-label="缩放"><option>100%</option></select>
                    <Down w={8} color="#5f6b8c" />
                </Dropdown>
            </PaneFooter>
        </SidePane>
    );
}

function Document() {
    return (
        <DocArea>
            <DocView>
                <PageEdge />
                <Page>
                    <Para $sql>SELECT *<Typo>,sal</Typo>+IFNULL(comm,0) FROM <Typo>emp</Typo>;</Para>
                    <DocHeading $top={51}><Num $w={42}>4.3</Num>给列名添加别名</DocHeading>
                    <Para $wrap>
                        在上面查询中出现列名为 <Typo>sal</Typo>+IFNULL(comm,0)，这很不美观，现在我们给这一列给出一个别名，为 total：
                    </Para>
                    <Para $sql>SELECT *, <Typo>sal</Typo>+IFNULL(comm,0) AS total FROM <Typo>emp;</Typo></Para>
                    <Para>给列起别名时，是可以省略 AS 关键字的：</Para>
                    <Para $sql>SELECT *<Typo>,sal</Typo>+IFNULL(comm,0)    total FROM <Typo>emp</Typo>;</Para>
                    <DocTitle>
                        <SectionMark aria-label="章节">
                            <svg width="12" height="15" viewBox="0 0 12 15">
                                <path d="M0 0h8l4 4v11H0z" fill="#9fbbd3" />
                                <path d="M2 4.500h4M2 7.500h8M2 10.500h8M4 12.500h4" stroke="#fff" />
                            </svg>
                            <Down color="#9aabad" />
                        </SectionMark>
                        <Num $w={33}>5</Num>
                        <span>排序    order by  列名  <Typo>asc</Typo>(默认</span>
                        <Caret />
                        <span>) <Typo>desc</Typo></span>
                        <Pointer width="12" height="27" viewBox="0 0 12 27">
                            <path d="M2 .5h3l1 1 1-1h3M6 1v15M2 17.500h3l1-1 1 1h3" fill="none" stroke="#222" />
                            <path d="M1 19.500h10M2 21.500h8M1 23.500h10M3 25.500h6" stroke="#222" />
                        </Pointer>
                    </DocTitle>
                    <DocHeading $top={0}><Num $w={42}>5.1</Num>查询所有学生记录，按年龄升序排序</DocHeading>
                    <Para $sql>SELECT *</Para>
                    <Para $sql>FROM <Typo>stu</Typo></Para>
                    <Para $sql>ORDER BY sage ASC;</Para>
                    <Para>或者</Para>
                    <Para $sql>SELECT *</Para>
                </Page>
            </DocView>
            <HScroll>
                <ArrowSlot aria-label="向左">
                    <svg width="4" height="8" viewBox="0 0 4 8"><path d="M4 0v8L0 4z" fill="#5f6b8c" /></svg>
                </ArrowSlot>
                <HThumb><Grip turned /></HThumb>
                <ArrowSlot aria-label="向右">
                    <svg width="4" height="8" viewBox="0 0 4 8"><path d="M0 0v8l4-4z" fill="#5f6b8c" /></svg>
                </ArrowSlot>
            </HScroll>
        </DocArea>
    );
}

function Status() {
    return (
        <StatusBar>
            <StatusItem $w={55}>页码: 13</StatusItem>
            <StatusItem $w={75}>页面: 13/19</StatusItem>
            <StatusItem $w={40}>节: 1/1</StatusItem>
            <StatusDivider />
            <StatusItem $w={40}>行: 18</StatusItem>
            <StatusItem $w={36}>列: 25</StatusItem>
            <StatusDivider $gap={7} />
            <StatusItem $w={62}>字数: 4769</StatusItem>
            <StatusDivider />
            <GreenDot />
            <StatusItem $w={51}>拼写检查</StatusItem>
            <StatusDivider />
            <ViewButtons>
                <ViewButton $w={32} aria-label="全屏"><Small name="fit" /></ViewButton>
                <ViewButton $w={22} $active aria-label="页面视图"><Small name="viewPage" /></ViewButton>
                <ViewButton $w={32} aria-label="大纲视图"><Small name="viewList" /></ViewButton>
                <ViewButton $w={22} aria-label="Web视图"><Small name="viewWeb" /></ViewButton>
                <ViewButton $w={32} $active aria-label="护眼"><Small name="bulb" /><Down /></ViewButton>
                <ZoomValue>130 %</ZoomValue>
                <ZoomLine $gap={4} $color="#6c7080" />
                <ZoomLine $gap={10} $color="#3f80e0" />
            </ViewButtons>
        </StatusBar>
    );
}

function SystemBar() {
    return (
        <Taskbar>
            <StartButton aria-label="开始">
                <svg width="36" height="36" viewBox="0 0 36 36">
                    <defs>
                        <radialGradient id="orb" cx=".5" cy=".85" r=".9">
                            <stop offset="0" stopColor="#3fd0ee" />
                            <stop offset=".5" stopColor="#1c5f90" />
                            <stop offset="1" stopColor="#a8c8d8" />
                        </radialGradient>
                    </defs>
                    <circle cx="18" cy="18" r="17.500" fill="url(#orb)" stroke="#2c4d68" />
                    <path d="M10 9c3-2 5-1 7 0l-2 8c-2-1-4-1-7 0z" fill="#ee5a2a" />
                    <path d="M19 10c3 1 5 1 8-1l-2 8c-3 2-5 1-8 0z" fill="#92c83e" />
                    <path d="M8 19c3-1 5-1 7 0l-2 8c-2-1-4-2-7 0z" fill="#38a2e2" />
                    <path d="M16 19c3 1 5 2 8 0l-2 8c-3 2-5 1-8 0z" fill="#fcc72c" />
                </svg>
            </StartButton>
            <TaskGroup><Task $w={103}><Small name="clover" />F:\CZBK\it...</Task></TaskGroup>
            {['ie', 'star', 'book', 'desk', 'loop'].map((name) => (
                <LaunchSlot key={name} aria-label={name}><Small name={name} /></LaunchSlot>
            ))}
            <TaskGroup $gap={2}>
                <Task $w={103}><Small name="chat" />FeiQ检测...</Task>
                <Task $w={103}><Small name="chat" />王小晖(AA...</Task>
            </TaskGroup>
            <TaskGroup $active $gap={2}><Task><Small name="wps" />readme.d...</Task></TaskGroup>
            <TaskGroup $gap={2}><Task><Small name="cmd" />管理员: C:\...</Task></TaskGroup>
            <TaskGroup><Task><Small name="dolphin" />SQLyog U...</Task></TaskGroup>
            <LinkBar>
                <Faded>API</Faded>
                <Small name="help" />
                CSS3.0
            </LinkBar>
            <Tray>
                <LaunchSlot $w={21} aria-label="更多链接">
                    <svg width="8" height="7" viewBox="0 0 8 7"><path d="M1 0l3 3-3 3M4 0l3 3-3 3" fill="none" stroke="#fff" strokeWidth="1.300" /></svg>
                </LaunchSlot>
                <LaunchSlot $w={24} aria-label="输入法"><Small name="sogou" /></LaunchSlot>
                <LaunchSlot $w={28} aria-label="隐藏的图标">
                    <svg width="8" height="4" viewBox="0 0 8 4"><path d="M0 4h8L4 0z" fill="#fff" /></svg>
                </LaunchSlot>
                {['gRed', 'ball', 'stop', 'power', 'net', 'volume'].map((name) => (
                    <LaunchSlot key={name} $w={24} aria-label={name}><Small name={name} /></LaunchSlot>
                ))}
                <Clock>16:13</Clock>
                <ShowDesktop aria-label="显示桌面" />
            </Tray>
        </Taskbar>
    );
}

function App() {
    return (
        <Screen>
            <GlobalStyle />
            <Header />
            <ViewRibbon />
            <DocumentTabs />
            <Body>
                <Outline />
                <Document />
                <VScroll $w={19} $bottom={20}>
                    <ArrowSlot $h={22} aria-label="标尺"><Small name="ruler" size={14} /></ArrowSlot>
                    <ArrowSlot aria-label="向上"><Up /></ArrowSlot>
                    <Track $grow={13} />
                    <VThumb $h={34}><Grip /></VThumb>
                    <Track $grow={7} />
                    <ArrowSlot aria-label="向下"><Down w={8} color="#5f6b8c" /></ArrowSlot>
                    <ArrowSlot aria-label="上一页"><DoubleArrow up /></ArrowSlot>
                    <ArrowSlot aria-label="选择浏览对象">
                        <svg width="6" height="6" viewBox="0 0 6 6"><circle cx="3" cy="3" r="2" fill="none" stroke="#5f6b8c" /></svg>
                    </ArrowSlot>
                    <ArrowSlot aria-label="下一页"><DoubleArrow /></ArrowSlot>
                </VScroll>
                <DockStrip>
                    <DockHandle aria-label="任务窗格">
                        <svg width="4" height="6" viewBox="0 0 4 6"><path d="M4 0v6L0 3z" fill="#fff" /></svg>
                    </DockHandle>
                </DockStrip>
            </Body>
            <Status />
            <SystemBar />
            <ImeBar>
                <Small name="sogouTilted" />
                五
                <Small name="crescent" />
                <Small name="punct" />
                <Small name="keyboard" />
                <Small name="user" />
                <Small name="wrench" />
            </ImeBar>
            <SpeedBall>39</SpeedBall>
        </Screen>
    );
}

export default App;
